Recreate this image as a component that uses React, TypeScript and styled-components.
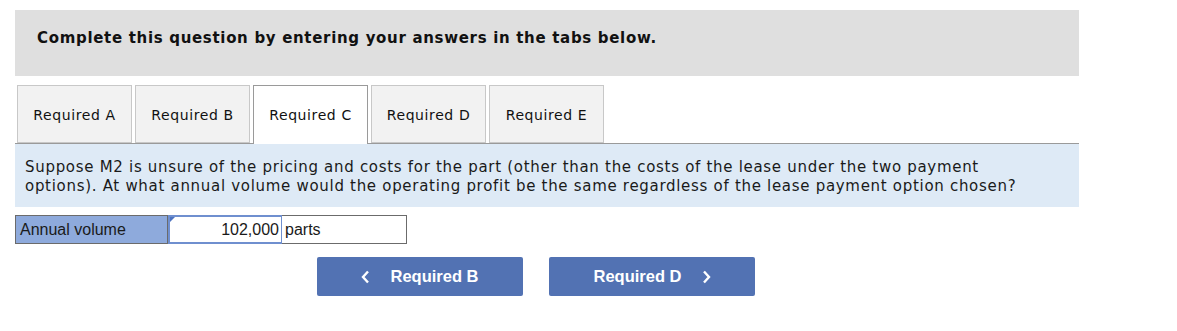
import React from "react";
import styled, { createGlobalStyle } from "styled-components";

const Global = createGlobalStyle`
  html, body { margin: 0; padding: 0; background: #ffffff; }
  body { font-family: "DejaVu Sans", Verdana, sans-serif; color: #1a1a1a; }
`;

const Page = styled.div`
  width: 1064px;
  padding: 10px 0 0 15px;
`;

const Banner = styled.div`
  height: 66px;
  background: #dfdfdf;
  display: flex;
  align-items: center;
  padding: 0 0 10px 22px;
  box-sizing: border-box;
  font-weight: bold;
  font-size: 15px;
  letter-spacing: 0.68px;
  color: #111;
`;

const TabBar = styled.div`
  margin-top: 9px;
  display: flex;
  gap: 3px;
  padding-left: 2px;
  border-bottom: 1px solid #9a9a9a;
  height: 58px;
`;

const Tab = styled.div<{ $active?: boolean }>`
  width: 115px;
  box-sizing: border-box;
  height: ${(p) => (p.$active ? "59px" : "58px")};
  background: ${(p) => (p.$active ? "#ffffff" : "#f2f2f2")};
  border: 1px solid ${(p) => (p.$active ? "#9a9a9a" : "#c8c8c8")};
  border-bottom: ${(p) => (p.$active ? "none" : "1px solid #c8c8c8")};
  display: flex;
  align-items: center;
  justify-content: center;
  padding-top: ${(p) => (p.$active ? "0" : "2px")};
  font-size: 14px;
  letter-spacing: 0.6px;
  color: #111;
  position: relative;
  z-index: 1;
`;

const Prompt = styled.div`
  background: #deeaf6;
  height: 63px;
  box-sizing: border-box;
  padding: 14px 10px 0 10px;
  font-size: 15px;
  letter-spacing: 0.7px;
  line-height: 19px;
  color: #1a1a1a;
`;

const Row = styled.div`
  margin-top: 8px;
  display: flex;
  height: 29px;
  font-family: "Liberation Sans", Arial, sans-serif;
  font-size: 16px;
`;

const LabelCell = styled.div`
  width: 153px;
  box-sizing: border-box;
  background: #8eaadc;
  border: 1px solid #6b6b6b;
  display: flex;
  align-items: center;
  padding-left: 4px;
  color: #1a1a1a;
`;

const InputCell = styled.div`
  width: 114px;
  box-sizing: border-box;
  border: 2px solid #6f8fcf;
  border-right-width: 1px;
  background: #fff;
  display: flex;
  align-items: center;
  justify-content: flex-end;
  padding-right: 2px;
  position: relative;
  color: #1a1a1a;
`;

const Marker = styled.span`
  position: absolute;
  left: 0;
  top: 0;
  width: 0;
  height: 0;
  border-top: 5px solid #4d73c0;
  border-right: 5px solid transparent;
`;

const UnitCell = styled.div`
  width: 125px;
  box-sizing: border-box;
  border: 1px solid #6b6b6b;
  border-left: none;
  display: flex;
  align-items: center;
  padding-left: 3px;
  color: #1a1a1a;
`;

const NavRow = styled.div`
  margin-top: 13px;
  display: flex;
  gap: 26px;
  padding-left: 302px;
`;

const NavButton = styled.button`
  width: 206px;
  height: 39px;
  border: none;
  border-radius: 2px;
  background: #5272b3;
  color: #fff;
  font-family: "Liberation Sans", Arial, sans-serif;
  font-weight: bold;
  font-size: 16.5px;
  display: flex;
  align-items: center;
  justify-content: center;
  gap: 20px;
  padding: 0;
`;

const Chevron = ({ dir }: { dir: "left" | "right" }) => (
  <svg width="9" height="14" viewBox="0 0 9 14">
    <path
      d={dir === "left" ? "M7 1.5 L2 7 L7 12.5" : "M2 1.5 L7 7 L2 12.5"}
      fill="none"
      stroke="#fff"
      strokeWidth="2.4"
    />
  </svg>
);

export default function App() {
  const tabs = ["Required A", "Required B", "Required C", "Required D", "Required E"];
  return (
    <Page>
      <Global />
      <Banner>Complete this question by entering your answers in the tabs below.</Banner>
      <TabBar>
        {tabs.map((t) => (
          <Tab key={t} $active={t === "Required C"}>
            {t}
          </Tab>
        ))}
      </TabBar>
      <Prompt>
        Suppose M2 is unsure of the pricing and costs for the part (other than the costs of the lease under the two payment
        <br />
        options). At what annual volume would the operating profit be the same regardless of the lease payment option chosen?
      </Prompt>
      <Row>
        <LabelCell>Annual volume</LabelCell>
        <InputCell>
          <Marker />
          102,000
        </InputCell>
        <UnitCell>parts</UnitCell>
      </Row>
      <NavRow>
        <NavButton>
          <Chevron dir="left" />
          <span>Required B</span>
        </NavButton>
        <NavButton>
          <span>Required D</span>
          <Chevron dir="right" />
        </NavButton>
      </NavRow>
    </Page>
  );
}
